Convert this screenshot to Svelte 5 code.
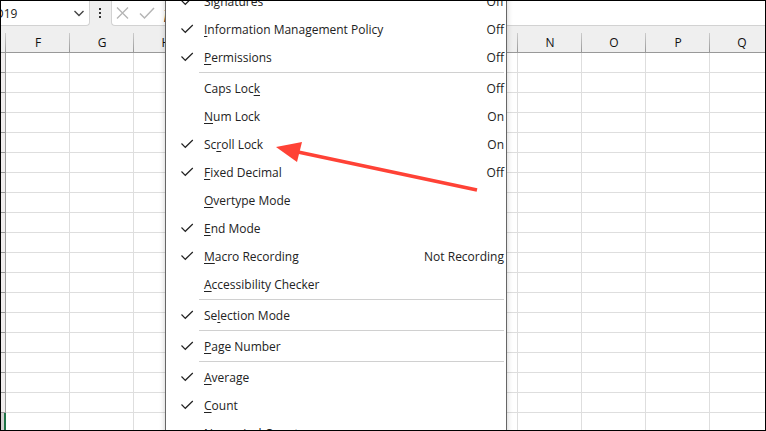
<script lang="ts">
  type Item = {
    label: string;
    key: number;
    checked?: boolean;
    value?: string;
  };

  const columns = 'FGHIJKLMNOPQ'.split('');
  const rows = Array.from({ length: 19 }, (_, i) => i + 1);
  const activeRow = 19;

  let cellName = $state('D19');

  // key is the index of the underlined access letter
  let groups: Item[][] = $state([
    [
      { label: 'Signatures', key: 2, checked: true, value: 'Off' },
      { label: 'Information Management Policy', key: 0, checked: true, value: 'Off' },
      { label: 'Permissions', key: 0, checked: true, value: 'Off' }
    ],
    [
      { label: 'Caps Lock', key: 8, value: 'Off' },
      { label: 'Num Lock', key: 0, value: 'On' },
      { label: 'Scroll Lock', key: 2, checked: true, value: 'On' },
      { label: 'Fixed Decimal', key: 0, checked: true, value: 'Off' },
      { label: 'Overtype Mode', key: 0 },
      { label: 'End Mode', key: 0, checked: true },
      { label: 'Macro Recording', key: 0, checked: true, value: 'Not Recording' },
      { label: 'Accessibility Checker', key: 0 }
    ],
    [{ label: 'Selection Mode', key: 2, checked: true }],
    [{ label: 'Page Number', key: 0, checked: true }],
    [
      { label: 'Average', key: 0, checked: true },
      { label: 'Count', key: 0, checked: true },
      { label: 'Numerical Count', key: 8 }
    ]
  ]);
</script>

<div class="window">
  <div class="formula-bar">
    <div class="name-box">
      <input class="name-input" aria-label="Name box" bind:value={cellName} />
      <button class="icon-button" aria-label="Show names">
        <svg width="12" height="8" viewBox="0 0 12 8"><path d="M1.5 2 6 6.500 10.500 2" stroke="#444" stroke-width="1.400" /></svg>
      </button>
    </div>
    <svg class="grip" width="3" height="11" viewBox="0 0 3 11"><path d="M0 0h2v2H0zM0 4h2v2H0zM0 8h2v2H0z" fill="#333" /></svg>
    <div class="formula-box">
      <button class="icon-button" aria-label="Cancel">
        <svg width="14" height="14" viewBox="0 0 14 14"><path d="m1 1.500 11 11m0-11-11 11" stroke="#b5b5b5" stroke-width="1.300" /></svg>
      </button>
      <button class="icon-button" aria-label="Enter">
        <svg width="16" height="14" viewBox="0 0 16 14"><path d="m1 7.500 4.500 4.500L15 2" stroke="#b5b5b5" stroke-width="1.500" /></svg>
      </button>
      <button class="icon-button fx" aria-label="Insert function">fx</button>
    </div>
  </div>

  <table class="sheet">
    <thead>
      <tr>
        <th class="corner"></th>
        {#each columns as column}
          <th class="column-head" scope="col">{column}</th>
        {/each}
      </tr>
    </thead>
    <tbody>
      {#each rows as row}
        <tr>
          <th class="row-head" class:active={row === activeRow} scope="row" aria-label={`Row ${row}`}></th>
          {#each columns as _}
            <td></td>
          {/each}
        </tr>
      {/each}
    </tbody>
  </table>

  <div class="menu" role="menu" aria-label="Customize status bar">
    {#each groups as group}
      <div class="group" role="group">
        {#each group as item}
          <button
            class="item"
            role="menuitemcheckbox"
            aria-checked={item.checked ? 'true' : 'false'}
            onclick={() => (item.checked = !item.checked)}
          >
            <span class="check">
              {#if item.checked}
                <svg width="14" height="10" viewBox="0 0 14 10"><path d="m1.500 4.500 3.800 3.800L12.800 1" stroke="#222" stroke-width="1.200" /></svg>
              {/if}
            </span>
            <span class="label">{item.label.slice(0, item.key)}<u>{item.label[item.key]}</u>{item.label.slice(item.key + 1)}</span>
            {#if item.value}
              <span class="value">{item.value}</span>
            {/if}
          </button>
        {/each}
      </div>
    {/each}
  </div>

  <svg class="arrow" width="202" height="52" viewBox="0 0 202 52" aria-hidden="true">
    <path d="M0 6 26 1l-5 20z" fill="#ff4236" />
    <path d="M22 11 201 49" stroke="#ff4236" stroke-width="3.800" />
  </svg>
</div>

<style>
  :global(body) {
    margin: 0;
  }

  .window {
    position: relative;
    box-sizing: border-box;
    height: 100vh;
    overflow: hidden;
    border: 1px solid #000;
    background: #fff;
    color: #222;
    font-family: 'Open Sans', 'Noto Sans', sans-serif;
    font-size: 12px;
  }

  svg {
    display: block;
    fill: none;
  }

  button {
    border: none;
    padding: 0;
    background: none;
    color: inherit;
    font: inherit;
  }

  .formula-bar {
    display: flex;
    align-items: stretch;
    height: 32px;
    box-sizing: border-box;
    padding-bottom: 7px;
    background: #efefef;
  }

  .name-box {
    display: flex;
    align-items: center;
    box-sizing: border-box;
    width: 100px;
    margin-left: -11px;
    padding: 0 4px;
    border: 1px solid #d2d2d2;
    border-top: none;
    border-radius: 0 0 4px 4px;
    background: #fff;
  }

  .name-input {
    flex: 1;
    min-width: 0;
    border: none;
    outline: none;
    padding: 0;
    background: transparent;
    color: #222;
    font: inherit;
  }

  .icon-button {
    flex: none;
  }

  .grip {
    align-self: center;
    margin: 0 9px;
  }

  .formula-box {
    display: flex;
    flex: 1;
    align-items: center;
    gap: 9px;
    padding-left: 4px;
    border: 1px solid #d2d2d2;
    border-width: 0 0 1px 1px;
    border-radius: 0 0 0 4px;
    background: #fff;
  }

  .fx {
    font-family: 'Liberation Serif', serif;
    font-size: 16px;
    font-style: italic;
  }

  .sheet {
    table-layout: fixed;
    width: 0;
    border-spacing: 0;
  }

  th,
  td {
    box-sizing: border-box;
    height: 20px;
    padding: 0;
    font-weight: 400;
  }

  td {
    border-right: 1px solid #dedede;
    border-bottom: 1px solid #dedede;
  }

  .corner,
  .column-head {
    border-bottom: 1px solid #999;
    background: linear-gradient(#ccc, #999) right / 1px 100% no-repeat #efefef;
  }

  .column-head {
    width: 64px;
    line-height: 18px;
    color: #111;
  }

  .corner {
    width: 5px;
  }

  .row-head {
    border-right: 1px solid #999;
    border-bottom: 1px solid #999;
    background: #f1eeee;
  }

  .row-head.active {
    border-right: 2px solid #1e7346;
    background: #d3d0d1;
  }

  .menu {
    position: absolute;
    top: -15px;
    left: 164px;
    box-sizing: border-box;
    width: 342px;
    border: 1px solid #666;
    background: #fff;
    box-shadow: 0 0 6px rgba(0, 0, 0, 0.2);
  }

  .group + .group::before {
    content: '';
    display: block;
    height: 1px;
    margin: 1px 2px 1px 33px;
    background: #d0d0d0;
  }

  .item {
    display: flex;
    align-items: center;
    width: 100%;
    height: 28px;
    padding: 0 2px 0 14px;
    text-align: left;
    white-space: nowrap;
  }

  .check {
    flex: none;
    width: 24px;
  }

  .label {
    flex: 1;
  }

  u {
    text-underline-offset: 2px;
  }

  .arrow {
    position: absolute;
    top: 140px;
    left: 275px;
    pointer-events: none;
  }
</style>
